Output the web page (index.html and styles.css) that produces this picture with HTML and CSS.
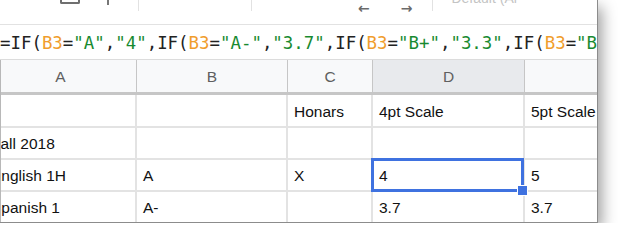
FILE: index.html
```
<!DOCTYPE html>
<html lang="en">
<head>
    <meta charset="UTF-8">
    <title>Grade Sheet</title>
    <link rel="stylesheet" href="styles.css">
</head>
<body>
    <div class="frame">
        <div class="toolbar">
            <span class="tool-box"></span>
            <span class="tool-tick"></span>
            <span class="tool-sep sep-1"></span>
            <span class="tool-sep sep-2"></span>
            <span class="tool-arrow arrow-left">&#x2190;</span>
            <span class="tool-arrow arrow-right">&#x2192;</span>
            <span class="tool-sep sep-3"></span>
            <span class="tool-font">Default (Ar</span>
        </div>

        <div class="formula-bar">
            <span class="formula">=IF(<span class="ref">B3</span>=<span class="str">"A"</span>,<span class="str">"4"</span>,IF(<span class="ref">B3</span>=<span class="str">"A-"</span>,<span class="str">"3.7"</span>,IF(<span class="ref">B3</span>=<span class="str">"B+"</span>,<span class="str">"3.3"</span>,IF(<span class="ref">B3</span>=<span class="str">"B"</span>,<span class="str">"3"</span>)))))</span>
        </div>

        <div class="sheet">
            <div class="grid">
                <div class="col-head">A</div>
                <div class="col-head">B</div>
                <div class="col-head">C</div>
                <div class="col-head active">D</div>
                <div class="col-head">E</div>

                <div class="cell"></div>
                <div class="cell"></div>
                <div class="cell">Honars</div>
                <div class="cell">4pt Scale</div>
                <div class="cell">5pt Scale</div>

                <div class="cell">Fall 2018</div>
                <div class="cell"></div>
                <div class="cell"></div>
                <div class="cell"></div>
                <div class="cell"></div>

                <div class="cell">English 1H</div>
                <div class="cell">A</div>
                <div class="cell">X</div>
                <div class="cell selected">4<span class="handle"></span></div>
                <div class="cell">5</div>

                <div class="cell">Spanish 1</div>
                <div class="cell">A-</div>
                <div class="cell"></div>
                <div class="cell">3.7</div>
                <div class="cell">3.7</div>
            </div>
        </div>
    </div>
</body>
</html>
```

FILE: styles.css
```
body {
    margin: 0;
    background-color: white;
    font-family: "Liberation Sans", Arial, sans-serif;
}
.frame {
    width: 598px;
    height: 223px;
    box-sizing: border-box;
    border-right: 1px solid #8c8c8c;
    border-bottom: 1px solid #8c8c8c;
    background-color: white;
    box-shadow: 4px 7px 14px rgba(0,0,0,0.38);
    overflow: hidden;
}

/* toolbar, mostly cut off at the top */
.toolbar {
    height: 24px;
    display: flex;
    align-items: flex-start;
    overflow: hidden;
}
.tool-box {
    margin-left: 60px;
    width: 20px;
    height: 4px;
    border: 2px solid #6f6f6f;
    border-top: none;
    border-radius: 0 0 2px 2px;
    box-sizing: border-box;
}
.tool-tick {
    margin-left: 27px;
    width: 2px;
    height: 5px;
    background-color: #777;
}
.tool-sep {
    width: 1px;
    height: 11px;
    background-color: #e2e2e2;
}
.sep-1 { margin-left: 29px; }
.sep-2 { margin-left: 112px; }
.sep-3 { margin-left: 20px; }
.tool-arrow {
    font-family: "DejaVu Sans", sans-serif;
    font-size: 14px;
    line-height: 14px;
    color: #6a6a6a;
    margin-top: 1px;
    font-weight: bold;
}
.arrow-left { margin-left: 106px; }
.arrow-right { margin-left: 31px; }
.tool-font {
    margin-left: 18px;
    margin-top: -10px;
    font-size: 14px;
    color: #c4c4c4;
}

/* formula bar */
.formula-bar {
    height: 36px;
    box-sizing: border-box;
    border-top: 1px solid #e2e2e2;
    border-bottom: 1px solid #dcdcdc;
    display: flex;
    align-items: center;
    white-space: nowrap;
    overflow: hidden;
}
.formula {
    font-family: "DejaVu Sans Mono", monospace;
    font-size: 17.4px;
    color: #222;
    padding-top: 1px;
}
.ref {
    color: #f09d2c;
}
.str {
    color: #188a30;
}

/* grid */
.sheet {
    border-left: 1px solid #b8b8b8;
    overflow: hidden;
    height: 163px;
}
.grid {
    display: grid;
    grid-template-columns: 152px 151px 85px 152px 200px;
    grid-template-rows: 35px 33px 32px 32px 32px;
    margin-left: -16px;
}
.col-head {
    background-color: #f8f9fa;
    border-right: 1px solid #c6c6c6;
    border-bottom: 3px solid #c6c6c6;
    color: #5f5f5f;
    font-size: 15.5px;
    display: flex;
    align-items: center;
    justify-content: center;
    padding-top: 2px;
    box-sizing: border-box;
}
.col-head.active {
    background-color: #e8eaed;
}
.cell {
    border-right: 2px solid #e3e3e3;
    border-bottom: 2px solid #e3e3e3;
    box-sizing: border-box;
    font-size: 15.5px;
    color: #111;
    padding: 0 0 5px 6px;
    display: flex;
    align-items: flex-end;
    white-space: nowrap;
    position: relative;
}
.cell.selected::after {
    content: "";
    position: absolute;
    left: -2px;
    top: -2px;
    right: -1px;
    bottom: -2px;
    border: 3px solid #3f72e0;
}
.handle {
    position: absolute;
    right: -5px;
    bottom: -6px;
    width: 9px;
    height: 9px;
    background-color: #3f72e0;
    border: 1px solid white;
    z-index: 1;
}
```
